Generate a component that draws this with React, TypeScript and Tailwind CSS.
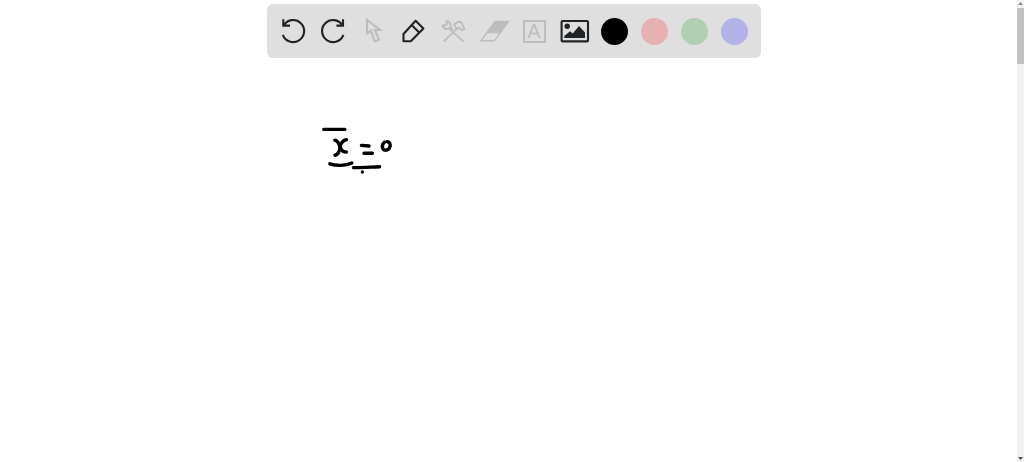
import type { ReactNode } from "react";

const ink = "#202427";
const muted = "#bdbdbd";

function Icon({ color, children }: { color: string; children: ReactNode }) {
  return (
    <svg
      viewBox="1 0 40 40"
      className="size-10"
      fill="none"
      stroke={color}
      strokeWidth="2.1"
      aria-hidden="true"
    >
      {children}
    </svg>
  );
}

const tools: { label: string; icon: ReactNode }[] = [
  {
    label: "Undo",
    icon: (
      <Icon color={ink}>
        <path d="M9.8 23.8A11 11 0 1 0 10.8 14.2M10.3 8.2V14.6H17" />
      </Icon>
    ),
  },
  {
    label: "Redo",
    icon: (
      <Icon color={ink}>
        <path d="M30.4 23.8A11 11 0 1 1 29.4 14.2M30 8.2V14.6H23.4" />
      </Icon>
    ),
  },
  {
    label: "Select",
    icon: (
      <Icon color={muted}>
        <path d="M14 9V22.4L17.8 19.4L21.6 30.4L26 28.6L21.8 19H27Z" />
      </Icon>
    ),
  },
  {
    label: "Pen",
    icon: (
      <Icon color={ink}>
        <path
          d="M10.5 23V30.2H17.8L30.4 17.5L22.6 9.8ZM18.6 14L26.2 21.6"
          strokeLinejoin="round"
        />
      </Icon>
    ),
  },
  {
    label: "Tools",
    icon: (
      <Icon color={muted}>
        <path
          d="M9.2 14C9.8 17.6 13.2 18.8 16 17.4L30.4 30.6M13.2 10C16.8 10.4 18.4 13.4 17.2 16L20 18.6M9.2 14L12.4 14.4L13.8 13L13.2 10"
          strokeWidth="1.9"
        />
        <path
          d="M10.6 30.6L24 17.4M21 13.4L25.4 10.8L28.2 11.2L31.4 18L28.6 19.4L26.2 16.8L24 18Z"
          strokeWidth="1.9"
        />
      </Icon>
    ),
  },
  {
    label: "Eraser",
    icon: (
      <Icon color={muted}>
        <path d="M22 10.5H35.4L21.4 29.8H8Z" strokeWidth="1.4" />
        <path d="M22 10.5H35.4L27.2 21.8H13.8Z" fill={muted} strokeWidth="1" />
      </Icon>
    ),
  },
  {
    label: "Text",
    icon: (
      <span className="flex size-[23px] items-center justify-center border-2 border-[#bdbdbd] font-['Liberation_Sans',sans-serif] text-xl leading-none text-[#bdbdbd]">
        A
      </span>
    ),
  },
  {
    label: "Image",
    icon: (
      <Icon color={ink}>
        <rect x="8.6" y="10" width="26.4" height="20.4" rx="1" />
        <circle cx="14.2" cy="15.2" r="2.7" fill={ink} stroke="none" />
        <path
          d="M11.3 27V25L17 20.3L19.7 22.6L26 15L32 21.6V27Z"
          fill={ink}
          stroke="none"
        />
      </Icon>
    ),
  },
];

const colors = [
  { label: "Black", swatch: "bg-black" },
  { label: "Red", swatch: "bg-[#e6b1b1]" },
  { label: "Green", swatch: "bg-[#b1cfb3]" },
  { label: "Blue", swatch: "bg-[#b3b2e6]" },
];

function Toolbar() {
  return (
    <div
      role="toolbar"
      aria-label="Drawing tools"
      className="flex items-center rounded-md bg-[#dfdfdf] p-[7px]"
    >
      {tools.map((tool) => (
        <button
          key={tool.label}
          type="button"
          aria-label={tool.label}
          className="flex size-10 items-center justify-center"
        >
          {tool.icon}
        </button>
      ))}
      {colors.map((color) => (
        <button
          key={color.label}
          type="button"
          aria-label={color.label}
          className="flex size-10 items-center justify-center"
        >
          <span className={`size-[27px] rounded-full ${color.swatch}`} />
        </button>
      ))}
    </div>
  );
}

function Handwriting() {
  return (
    <svg
      viewBox="0 0 100 70"
      className="h-[70px] w-[100px]"
      fill="none"
      stroke="#000"
      strokeWidth="3.4"
      strokeLinecap="round"
      strokeLinejoin="round"
      role="img"
      aria-label="x bar equals 0"
    >
      <path d="M13.8 14.4H34.8" />
      <path d="M24.8 25.2C28 25.4 28.8 28.4 29.8 31.2C30.2 34.6 28.6 39.6 25 40.2" />
      <path d="M36.4 24.8C32.8 25.4 30.8 28.6 30 31.6C31 35 33 37.4 36.4 37" />
      <path d="M19.8 48.8C26 51 36 51 41.8 48" />
      <path d="M51.4 30.4L59 31M54 38.2H62.4" />
      <path d="M74.6 27C71.2 29.8 71.8 35.2 75.6 35.2C80.6 35.2 82 27.4 77.4 26.8" />
      <path d="M43.4 52.6C50 52.9 62 52 69.6 51.8M52.4 57V57.1" />
    </svg>
  );
}

function Scrollbar() {
  return (
    <div
      aria-hidden="true"
      className="flex w-[7px] flex-col items-center justify-between bg-[#f1f1f1]"
    >
      <div className="flex w-full flex-col items-center">
        <svg viewBox="0 0 7 8" className="h-2 w-[7px]" fill="#8a8a8a">
          <path d="M1 5L3.5 2L6 5Z" />
        </svg>
        <div className="h-14 w-full bg-[#c1c1c1]" />
      </div>
      <svg viewBox="0 0 7 8" className="h-2 w-[7px]" fill="#505050">
        <path d="M1 3L3.5 6L6 3Z" />
      </svg>
    </div>
  );
}

export default function App() {
  return (
    <div className="flex min-h-screen bg-white">
      <main className="flex-1">
        <div className="flex justify-center pt-1 pl-[11px]">
          <Toolbar />
        </div>
        <div className="pt-[57px] pl-[310px]">
          <Handwriting />
        </div>
      </main>
      <Scrollbar />
    </div>
  );
}
